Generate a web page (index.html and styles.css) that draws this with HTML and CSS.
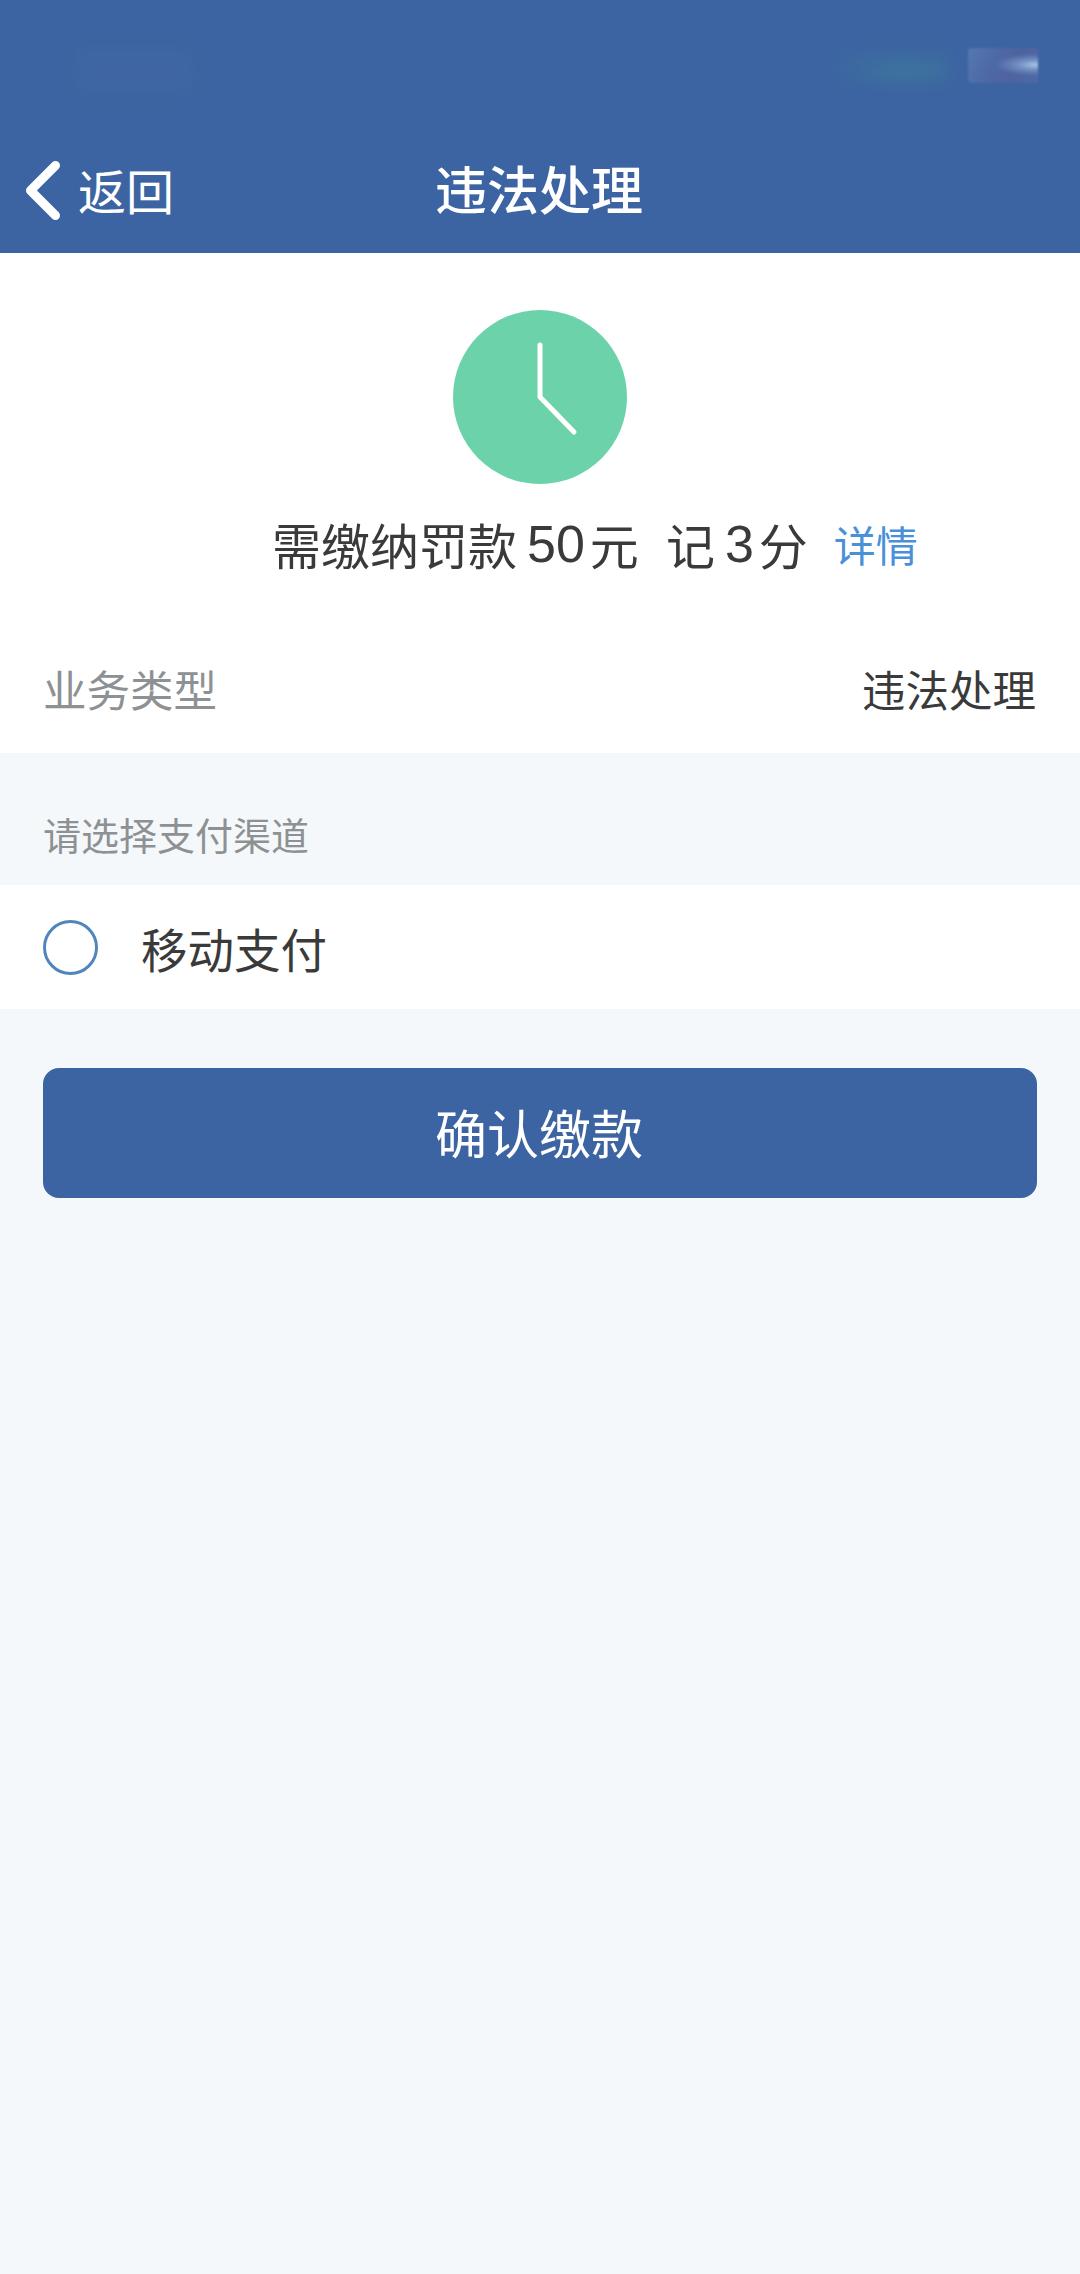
FILE: index.html
```html
<!DOCTYPE html>
<html lang="zh-CN">
<head>
  <meta charset="UTF-8">
  <title>违法处理</title>
  <meta name="viewport" content="width=device-width, initial-scale=1">
  <link rel="stylesheet" href="styles.css">
</head>
<body>
  <header class="top-bar">
    <!-- status bar was blurred out in the capture -->
    <div class="status-bar">
      <div class="blur-left"></div>
      <div class="blur-right">
        <div class="blur-signal"></div>
        <div class="blur-battery"></div>
      </div>
    </div>
    <div class="nav-row">
      <a class="back-btn">
        <svg class="back-icon" viewBox="0 0 40 66" width="40" height="66">
          <path d="M33.5 9.5 L8.5 34.5 L33.5 59.5" fill="none" stroke="#fff" stroke-width="9" stroke-linecap="round" stroke-linejoin="round"/>
        </svg>
        <span>返回</span>
      </a>
      <h1 class="nav-title">违法处理</h1>
    </div>
  </header>

  <section class="summary">
    <div class="clock">
      <svg viewBox="0 0 174 174" width="174" height="174">
        <circle cx="87" cy="87" r="87" fill="#6bd2aa"/>
        <path d="M87 35 L87 87 L121 122" fill="none" stroke="#fff" stroke-width="5" stroke-linecap="round" stroke-linejoin="round"/>
      </svg>
    </div>
    <div class="fine-row">
      <span>需缴纳罚款</span><span class="num">50</span><span>元</span>
      <span class="fine-points">记</span><span class="num">3</span><span>分</span>
      <a class="detail-link">详情</a>
    </div>
    <div class="type-row">
      <span class="type-label">业务类型</span>
      <span class="type-value">违法处理</span>
    </div>
  </section>

  <div class="pay-title">请选择支付渠道</div>

  <div class="pay-option">
    <span class="radio"></span>
    <span>移动支付</span>
  </div>

  <div class="actions">
    <button class="confirm-btn" type="button">确认缴款</button>
  </div>
</body>
</html>
```

FILE: styles.css
```css
body {
  margin: 0;
  min-height: 2274px;
  background: #f4f8fa;
  color: #3a3a3a;
  font-family: "Noto Sans CJK SC", "Liberation Sans", sans-serif;
}

.top-bar {
  height: 253px;
  background: #3c64a2;
  display: flex;
  flex-direction: column;
}
.status-bar {
  height: 140px;
  display: flex;
  justify-content: space-between;
  align-items: flex-start;
  padding: 48px 42px 0 76px;
  box-sizing: border-box;
}
.blur-left {
  width: 117px;
  height: 45px;
  background: rgba(72, 108, 166, 0.3);
  filter: blur(8px);
}
.blur-right { display: flex; align-items: center; gap: 18px; }
.blur-signal {
  width: 110px;
  height: 32px;
  background: radial-gradient(ellipse at 60% 75%, #3f7f98 0%, #3c6ca0 60%, #3c64a2 100%);
  opacity: 0.7;
  filter: blur(7px);
}
.blur-battery {
  width: 70px;
  height: 35px;
  border-radius: 3px;
  background:
    radial-gradient(ellipse at 97% 48%, #a9c6e6 0%, rgba(140, 175, 215, 0.6) 18%, rgba(140, 175, 215, 0) 42%),
    linear-gradient(115deg, #5478b2 0%, #4d6aa6 35%, #4f62a0 65%, #4d6aa6 100%);
  filter: blur(1px);
}
.nav-row {
  position: relative;
  flex: 1;
  display: flex;
  align-items: flex-start;
  justify-content: center;
  color: #fff;
}
.back-btn {
  position: absolute;
  left: 22px;
  top: 16px;
  display: flex;
  align-items: center;
  gap: 16px;
  font-size: 48px;
  line-height: 66px;
}
.back-icon { display: block; }
.nav-title {
  margin: 12px 2px 0 0;
  font-size: 52px;
  line-height: 72px;
  font-weight: 500;
}

.summary { background: #fff; height: 500px; display: flex; flex-direction: column; }
.clock { display: flex; justify-content: center; padding-top: 57px; height: 174px; }
.fine-row {
  margin-top: 24px;
  padding-left: 272px;
  height: 72px;
  display: flex;
  align-items: center;
  font-size: 49px;
  line-height: 72px;
}
.num { font-family: "Liberation Sans", sans-serif; font-size: 52px; margin: 0 5px 0 10px; }
.fine-points { margin-left: 27px; }
.detail-link { margin-left: 26px; color: #4a90d9; font-size: 42px; }
.type-row {
  margin-top: 79px;
  padding: 0 44px 0 43px;
  display: flex;
  justify-content: space-between;
  align-items: center;
  font-size: 43.5px;
  line-height: 60px;
}
.type-label { color: #8e9193; }

.pay-title {
  height: 132px;
  box-sizing: border-box;
  padding: 53px 44px 0 43px;
  color: #8e9193;
  font-size: 38px;
  line-height: 56px;
}
.pay-option {
  height: 124px;
  background: #fff;
  display: flex;
  align-items: center;
  gap: 43px;
  padding-left: 43px;
  font-size: 46.5px;
}
.radio {
  width: 55px;
  height: 55px;
  box-sizing: border-box;
  border: 3px solid #4f86bd;
  border-radius: 50%;
}

.actions { padding: 59px 43px 0 43px; }
.confirm-btn {
  display: block;
  width: 100%;
  height: 130px;
  padding: 0 2px 4px 0;
  border: none;
  border-radius: 16px;
  background: #3c64a2;
  color: #fff;
  font-family: inherit;
  font-size: 52px;
}
```
